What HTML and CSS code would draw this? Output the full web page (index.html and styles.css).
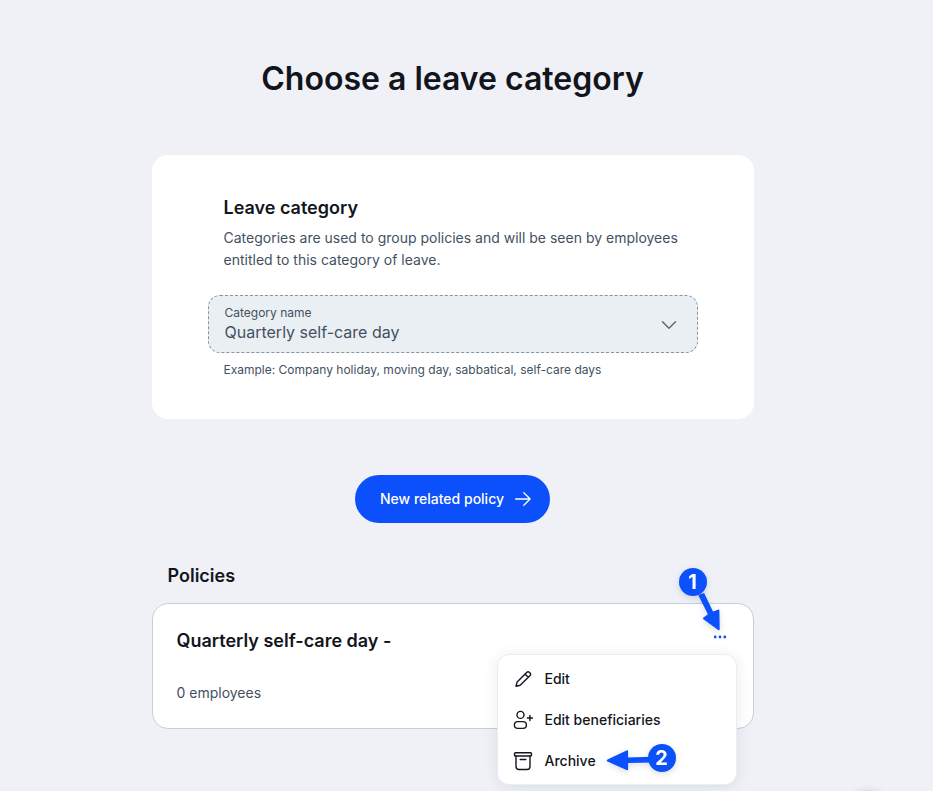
FILE: index.html
```html
<!DOCTYPE html>
<html lang="en">
<head>
<meta charset="utf-8">
<meta name="viewport" content="width=device-width, initial-scale=1">
<title>Choose a leave category</title>
<link rel="stylesheet" href="styles.css">
</head>
<body>
<main class="page">
  <h1 class="page-title">Choose a leave category</h1>

  <section class="category-card">
    <h2 class="heading">Leave category</h2>
    <p class="description">Categories are used to group policies and will be seen by employees entitled to this category of leave.</p>
    <div class="field">
      <label class="field-label" for="category">Category name</label>
      <select class="field-select" id="category" disabled>
        <option>Quarterly self-care day</option>
      </select>
      <svg class="field-chevron" viewBox="0 0 16 16" aria-hidden="true"><path d="M1.5 4.8 8 11.3l6.500-6.500"/></svg>
    </div>
    <p class="hint">Example: Company holiday, moving day, sabbatical, self-care days</p>
  </section>

  <button class="primary" type="button">
    New related policy
    <svg class="primary-icon" viewBox="0 0 16 16" aria-hidden="true"><path d="M.7 8h14.400M8.800 1.700 15.100 8l-6.300 6.300"/></svg>
  </button>

  <section class="policies">
    <h2 class="heading policies-title">Policies</h2>
    <article class="policy">
      <div class="policy-header">
        <h3 class="heading">Quarterly self-care day -</h3>
        <button class="more" type="button" aria-label="More actions">
          <svg class="more-icon" viewBox="0 0 14 4" aria-hidden="true"><circle cx="2.200" cy="2" r="1.400"/><circle cx="7" cy="2" r="1.400"/><circle cx="11.800" cy="2" r="1.400"/></svg>
        </button>
      </div>
      <p class="policy-count">0 employees</p>

      <div class="menu">
        <button class="menu-item" type="button">
          <svg class="menu-icon" viewBox="0 0 20 20" aria-hidden="true"><path d="m3 17.200 1.100-4.100L13.900 3.200a1.600 1.600 0 0 1 2.300 0l.9.900a1.600 1.600 0 0 1 0 2.300L7.200 16.200zM12 5.100l3.200 3.200"/></svg>
          Edit
        </button>
        <button class="menu-item" type="button">
          <svg class="menu-icon" viewBox="0 0 20 20" aria-hidden="true"><circle cx="7.500" cy="4.900" r="3.500"/><rect x="1.400" y="11.600" width="12" height="6.800" rx="3.400"/><path d="M14.400 8h5M16.900 5.500v5"/></svg>
          Edit beneficiaries
        </button>
        <button class="menu-item" type="button">
          <svg class="menu-icon" viewBox="0 0 20 20" aria-hidden="true"><rect x="1.500" y="1.700" width="17" height="3.300" rx="1"/><path d="M3 5v10.500a3 3 0 0 0 3 3h8a3 3 0 0 0 3-3V5M7.200 8.500h5.600"/></svg>
          Archive
        </button>
        <div class="step step-two">
          <svg class="step-two-arrow" viewBox="0 0 48 24" aria-hidden="true"><path d="M1.500 11.600 20.500 2.400q1.600-.7 1.600 1V9.500L46 8.800v5.600L22.100 14.900v6.100q0 1.700-1.600 1L1.500 13.400q-1.600-.9 0-1.800z"/></svg>
          <span class="step-number">2</span>
        </div>
      </div>

      <div class="step step-one">
        <span class="step-number">1</span>
        <svg class="step-one-arrow" viewBox="0 0 30 40" aria-hidden="true"><path d="m9.100 1 8.900 18.600 4.900-1.900q1.500-.5 1.500 1L24.700 37q0 1.800-1.500 1L8.400 27.200q-1.300-1 .2-1.700L12.900 22.300 3.200 3z"/></svg>
      </div>
    </article>
  </section>
</main>
<div class="launcher" aria-hidden="true"></div>
</body>
</html>
```

FILE: styles.css
```css
* {
  box-sizing: border-box;
}

body {
  min-height: 100vh;
  margin: 0;
  padding: 0 44px 0 16px;
  background: #f0f1f7;
  color: #12161c;
  font: 14px/22px Inter, "Liberation Sans", sans-serif;
}

h1, h2, h3, p {
  margin: 0;
}

svg {
  display: block;
  fill: none;
  stroke: currentColor;
  stroke-linecap: round;
  stroke-linejoin: round;
}

button {
  border: 0;
  font: inherit;
  cursor: pointer;
}

.page {
  display: flex;
  flex-direction: column;
  max-width: 602px;
  margin: 0 auto;
  padding-top: 59px;
}

.page-title {
  text-align: center;
  font-size: 32px;
  line-height: 40px;
  font-weight: 600;
}

.category-card {
  margin-top: 56px;
  padding: 41px 56px;
  border-radius: 16px;
  background: #fff;
}

.heading {
  font-size: 18px;
  line-height: 24px;
  font-weight: 600;
}

.category-card .heading,
.description,
.hint {
  padding: 0 16px;
}

.description {
  margin-top: 7px;
  color: #43515f;
}

.field {
  position: relative;
  margin-top: 24px;
}

.field-label {
  position: absolute;
  top: 10px;
  left: 17px;
  color: #43515f;
  font-size: 12px;
  line-height: 16px;
}

.field-select {
  display: block;
  width: 100%;
  height: 58px;
  padding: 16px 48px 0 16px;
  border: 1px dashed #8496a6;
  border-radius: 12px;
  background: #eaeff4;
  color: #43515f;
  font: 16px/24px Inter, "Liberation Sans", sans-serif;
  appearance: none;
  opacity: 1;
}

.field-chevron {
  position: absolute;
  top: 22px;
  right: 21px;
  width: 16px;
  height: 16px;
  color: #5b6b7b;
  stroke-width: 1.5;
  pointer-events: none;
}

.hint {
  margin-top: 9px;
  color: #43515f;
  font-size: 12px;
  line-height: 16px;
}

.primary {
  display: flex;
  align-items: center;
  align-self: center;
  gap: 11px;
  height: 48px;
  margin-top: 56px;
  padding: 0 19px 0 25px;
  border-radius: 24px;
  background: #0b50fa;
  color: #fff;
  font-weight: 500;
}

.primary-icon {
  width: 16px;
  height: 16px;
  stroke-width: 1.3;
}

.policies {
  margin-top: 41px;
}

.policies-title {
  padding: 0 16px;
}

.policy {
  position: relative;
  margin-top: 15px;
  padding: 25px 24px 24px;
  border: 1px solid #c3d0dc;
  border-radius: 16px;
  background: #fff;
}

.policy-header {
  display: flex;
  justify-content: space-between;
  align-items: center;
}

.more {
  padding: 4px 2px 12px;
  background: none;
  color: #0b50fa;
}

.more-icon {
  width: 14px;
  height: 4px;
  fill: currentColor;
  stroke: none;
}

.policy-count {
  margin-top: 29px;
  color: #43515f;
}

.menu {
  position: absolute;
  top: 50px;
  right: 16px;
  width: 240px;
  padding: 3px 0;
  border: 1px solid #e9eef3;
  border-radius: 12px;
  background: #fff;
  box-shadow: 0 2px 14px rgb(30 50 80 / 10%);
}

.menu-item {
  display: flex;
  align-items: center;
  gap: 12px;
  width: 100%;
  height: 41px;
  padding: 0 15px;
  background: none;
  color: #12161c;
  font-weight: 500;
}

.menu-icon {
  width: 20px;
  height: 20px;
  stroke-width: 1.4;
}

.step {
  position: absolute;
  display: flex;
  color: #0b50fa;
  filter: drop-shadow(0 2px 3px rgb(30 50 80 / 18%));
}

.step svg {
  fill: currentColor;
  stroke: none;
}

.step-number {
  width: 28px;
  height: 28px;
  border-radius: 50%;
  background: #0b50fa;
  color: #fff;
  font-size: 20px;
  line-height: 28px;
  font-weight: 700;
  text-align: center;
}

.step-one {
  top: -36px;
  right: 46px;
}

.step-one-arrow {
  position: absolute;
  top: 24px;
  left: 16px;
  width: 30px;
  height: 40px;
}

.step-two {
  right: 60px;
  bottom: 12px;
}

.step-two-arrow {
  width: 48px;
  height: 24px;
  margin: 4px -6px 0 0;
}

.launcher {
  position: fixed;
  right: 41px;
  bottom: -49px;
  width: 48px;
  height: 48px;
  border-radius: 50%;
  box-shadow: 0 1px 8px rgb(0 0 0 / 25%);
}
```
